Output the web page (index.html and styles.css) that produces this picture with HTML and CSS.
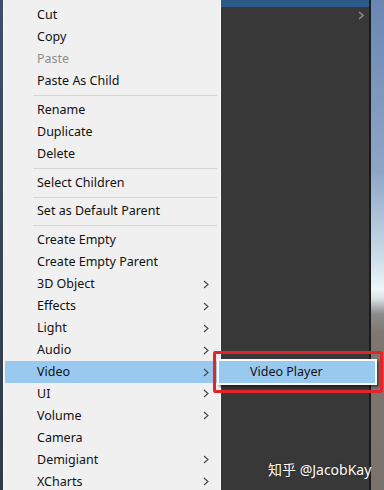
FILE: index.html
```html
<!DOCTYPE html>
<html>
<head>
<meta charset="utf-8">
<link rel="stylesheet" href="styles.css">
</head>
<body>
<div class="edge"></div>
<div class="menu">
  <div class="item">Cut</div>
  <div class="item">Copy</div>
  <div class="item disabled">Paste</div>
  <div class="item">Paste As Child</div>
  <div class="sep"></div>
  <div class="item">Rename</div>
  <div class="item">Duplicate</div>
  <div class="item">Delete</div>
  <div class="sep"></div>
  <div class="item">Select Children</div>
  <div class="sep"></div>
  <div class="item">Set as Default Parent</div>
  <div class="sep"></div>
  <div class="item">Create Empty</div>
  <div class="item">Create Empty Parent</div>
  <div class="item sub">3D Object<svg class="chev" viewBox="0 0 6 9"><polyline points="1,1 5,4.5 1,8"/></svg></div>
  <div class="item sub">Effects<svg class="chev" viewBox="0 0 6 9"><polyline points="1,1 5,4.5 1,8"/></svg></div>
  <div class="item sub">Light<svg class="chev" viewBox="0 0 6 9"><polyline points="1,1 5,4.5 1,8"/></svg></div>
  <div class="item sub">Audio<svg class="chev" viewBox="0 0 6 9"><polyline points="1,1 5,4.5 1,8"/></svg></div>
  <div class="item sub active">Video<svg class="chev" viewBox="0 0 6 9"><polyline points="1,1 5,4.5 1,8"/></svg></div>
  <div class="item sub">UI<svg class="chev" viewBox="0 0 6 9"><polyline points="1,1 5,4.5 1,8"/></svg></div>
  <div class="item sub">Volume<svg class="chev" viewBox="0 0 6 9"><polyline points="1,1 5,4.5 1,8"/></svg></div>
  <div class="item">Camera</div>
  <div class="item sub">Demigiant<svg class="chev" viewBox="0 0 6 9"><polyline points="1,1 5,4.5 1,8"/></svg></div>
  <div class="item sub">XCharts<svg class="chev" viewBox="0 0 6 9"><polyline points="1,1 5,4.5 1,8"/></svg></div>
</div>
<div class="panel">
  <div class="topbar"></div>
  <div class="panel-head"><svg class="pchev" viewBox="0 0 6 9"><polyline points="1,1 5,4.5 1,8"/></svg></div>
</div>
<div class="sky"></div>

<div class="submenu"><div class="subitem">Video Player</div></div>
<div class="highlight-box"></div>
<div class="watermark">知乎 @JacobKay</div>
</body>
</html>
```

FILE: styles.css
```css
html, body {
  margin: 0;
  padding: 0;
}
body {
  width: 384px;
  height: 490px;
  overflow: hidden;
  display: flex;
  position: relative;
  background: #383838;
  font-family: "Noto Sans", "Noto Sans CJK SC", sans-serif;
}
.edge {
  width: 3px;
  flex: none;
  background: linear-gradient(#3c5068, #2f3a48);
}
.menu {
  width: 216px;
  flex: none;
  background: #f0f0f0;
  border-right: 1px solid #fbfbfb;
  border-left: 1px solid #f7f7f7;
  padding-top: 4px;
  box-sizing: content-box;
}
.item {
  height: 21.95px;
  line-height: 22px;
  padding-left: 33px;
  padding-right: 11px;
  font-size: 12.5px;
  color: #111;
  display: flex;
  align-items: center;
  justify-content: space-between;
}
.item.disabled {
  color: #8e8e8e;
}
.item.active {
  background: #99c9ef;
  margin-left: 1px;
  margin-right: 1px;
  padding-left: 32px;
  padding-right: 10px;
}
.chev {
  width: 6px;
  height: 9px;
  fill: none;
  stroke: #444;
  stroke-width: 1.1;
}
.sep {
  height: 7px;
  display: flex;
  align-items: center;
  padding-left: 29px;
  padding-right: 3px;
}
.sep::before {
  content: "";
  flex: 1;
  height: 1px;
  background: #d6d6d6;
}
.panel {
  width: 148px;
  flex: none;
  background: #383838;
  display: flex;
  flex-direction: column;
}
.topbar {
  height: 7px;
  background: #2d5a88;
}
.panel-head {
  display: flex;
  justify-content: flex-end;
  padding: 4px 5px 0 0;
}
.pchev {
  width: 6px;
  height: 9px;
  fill: none;
  stroke: #8a8a8a;
  stroke-width: 1.6;
}
.sky {
  flex: 1;
  border-left: 2px solid #1c1c1e;
  background: linear-gradient(#6a86b3 0%, #8ea6c6 35%, #c9dbe8 52%, #eef6fa 59%, #d9e0e4 61%, #8c8c8c 64%, #7e7670 68%, #7a726c 100%);
}
.submenu {
  position: absolute;
  left: 217px;
  top: 359px;
  width: 156px;
  height: 22px;
  border: 2px solid #fbfbfb;
  background: #99c9ef;
  box-shadow: 2px 2px 2px rgba(0,0,0,0.45);
}
.subitem {
  line-height: 22px;
  padding-left: 31px;
  font-size: 12.5px;
  color: #111;
}
.highlight-box {
  position: absolute;
  left: 213px;
  top: 351px;
  width: 164px;
  height: 36px;
  border: 3px solid #e2252a;
  border-radius: 2px;
}
.watermark {
  position: absolute;
  left: 268px;
  top: 459px;
  font-size: 14px;
  color: #ffffff;
  text-shadow: 0 0 2px rgba(0,0,0,0.5);
  white-space: nowrap;
}
```
